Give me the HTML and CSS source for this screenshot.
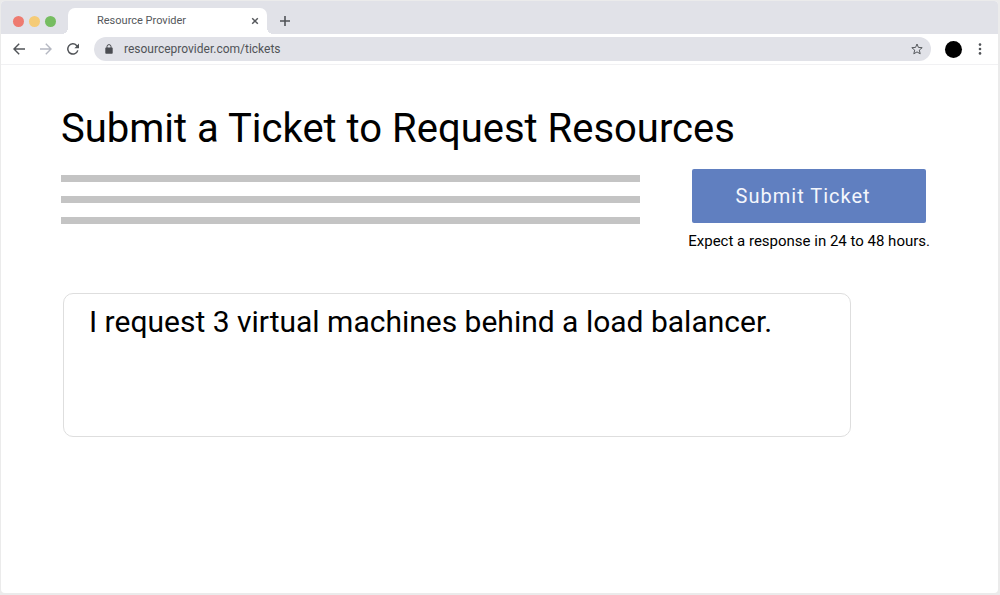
FILE: index.html
```html
<!DOCTYPE html>
<html lang="en">
<head>
  <meta charset="utf-8">
  <meta name="viewport" content="width=device-width, initial-scale=1">
  <title>Resource Provider</title>
  <link rel="stylesheet" href="styles.css">
</head>
<body>
  <div class="window">
    <div class="tab-strip">
      <div class="lights">
        <span class="light light-red"></span>
        <span class="light light-yellow"></span>
        <span class="light light-green"></span>
      </div>
      <div class="tab">
        <span class="tab-title">Resource Provider</span>
        <button class="icon-button" type="button" aria-label="Close tab">
          <svg width="8" height="8" viewBox="0 0 8 8"><path d="M1.2 1.2l5.6 5.6M6.8 1.2L1.2 6.8" stroke="#55585c" stroke-width="1.5"/></svg>
        </button>
      </div>
      <button class="icon-button new-tab" type="button" aria-label="New tab">
        <svg width="12" height="12" viewBox="0 0 12 12"><path d="M6 1v10M1 6h10" stroke="#505357" stroke-width="1.6"/></svg>
      </button>
    </div>
    <div class="toolbar">
      <div class="nav">
        <button class="icon-button" type="button" aria-label="Back">
          <svg width="12" height="12" viewBox="0 0 12 12" fill="none" stroke="#505357" stroke-width="1.4"><path d="M12 6H1.2M6.2 .8L1 6l5.2 5.2"/></svg>
        </button>
        <button class="icon-button" type="button" aria-label="Forward">
          <svg width="12" height="12" viewBox="0 0 12 12" fill="none" stroke="#b5b8c2" stroke-width="1.4"><path d="M0 6h10.8M5.8 .8L11 6l-5.2 5.2"/></svg>
        </button>
        <button class="icon-button" type="button" aria-label="Reload">
          <svg width="12" height="12" viewBox="0 0 12 12"><path d="M10.8 7.4A5.1 5.1 0 1 1 9.6 2.4L10.6 3.5" fill="none" stroke="#505357" stroke-width="1.5"/><path d="M12 .6v4.6H7.4z" fill="#505357"/></svg>
        </button>
      </div>
      <div class="address">
        <svg width="8" height="10" viewBox="0 0 8 10"><rect x=".3" y="3.6" width="7.4" height="6.2" rx=".8" fill="#4b4d52"/><path d="M2 4V2.6a2 2 0 0 1 4 0V4" fill="none" stroke="#4b4d52" stroke-width="1"/></svg>
        <input class="address-input" type="text" aria-label="Address" value="resourceprovider.com/tickets">
        <button class="icon-button" type="button" aria-label="Bookmark">
          <svg width="12" height="12" viewBox="0 0 12 12"><path d="M6 1l1.4 3.4 3.8.3-2.9 2.4.9 3.7L6 8.9l-3.2 1.9.9-3.7L.8 4.7l3.8-.3z" fill="none" stroke="#55585c" stroke-width="1"/></svg>
        </button>
      </div>
      <button class="icon-button avatar" type="button" aria-label="Profile"></button>
      <button class="icon-button" type="button" aria-label="Menu">
        <svg width="4" height="12" viewBox="0 0 4 12" fill="#505357"><circle cx="2" cy="1.6" r="1.3"/><circle cx="2" cy="6" r="1.3"/><circle cx="2" cy="10.4" r="1.3"/></svg>
      </button>
    </div>
    <main class="page">
      <h1 class="title">Submit a Ticket to Request Resources</h1>
      <div class="intro">
        <div class="lines">
          <span class="line"></span>
          <span class="line"></span>
          <span class="line"></span>
        </div>
        <div class="action">
          <button class="submit" type="submit" form="ticket">Submit Ticket</button>
          <p class="note">Expect a response in 24 to 48 hours.</p>
        </div>
      </div>
      <form class="ticket" id="ticket">
        <textarea class="request" aria-label="Request">I request 3 virtual machines behind a load balancer.</textarea>
      </form>
    </main>
  </div>
</body>
</html>
```
FILE: styles.css
```css
* {
  box-sizing: border-box;
}

body {
  margin: 0;
  padding: 1px 2px 2px 1px;
  background: #ebebeb;
  color: #000;
  font-family: Roboto, "Liberation Sans", sans-serif;
}

.window {
  min-height: calc(100vh - 3px);
  border-radius: 4px;
  background: #fff;
  overflow: hidden;
}

.icon-button {
  display: flex;
  flex: none;
  padding: 0;
  border: 0;
  background: none;
}

.tab-strip {
  display: flex;
  align-items: center;
  height: 33px;
  padding-top: 7px;
  background: #e1e2e8;
}

.lights {
  display: flex;
  gap: 5px;
  width: 67px;
  padding-left: 12px;
}

.light {
  width: 11px;
  height: 11px;
  border-radius: 50%;
}

.light-red {
  background: #ee7b70;
}

.light-yellow {
  background: #f5cb76;
}

.light-green {
  background: #76bd61;
}

.tab {
  position: relative;
  display: flex;
  align-items: center;
  justify-content: space-between;
  width: 199px;
  height: 26px;
  padding: 0 8px 0 29px;
  border-radius: 7px 7px 0 0;
  background: #fff;
}

.tab::before,
.tab::after {
  content: "";
  position: absolute;
  bottom: 0;
  width: 6px;
  height: 6px;
}

.tab::before {
  right: 100%;
  background: radial-gradient(circle at 0 0, transparent 6px, #fff 6px);
}

.tab::after {
  left: 100%;
  background: radial-gradient(circle at 100% 0, transparent 6px, #fff 6px);
}

.tab-title {
  color: #55585c;
  font-size: 11px;
  line-height: 14px;
}

.new-tab {
  margin-left: 12px;
}

.toolbar {
  display: flex;
  align-items: center;
  height: 31px;
  padding: 0 16px 0 12px;
  border-bottom: 1px solid #f1f1f3;
}

.nav {
  display: flex;
  gap: 15px;
  margin-right: 15px;
}

.address {
  display: flex;
  flex: 1;
  align-items: center;
  height: 24px;
  padding: 0 8px 0 11px;
  border-radius: 12px;
  background: #e1e2e8;
}

.address-input {
  flex: 1;
  min-width: 0;
  margin-left: 11px;
  padding: 0;
  border: 0;
  background: none;
  color: #505357;
  font: 12px/16px Roboto, "Liberation Sans", sans-serif;
}

.avatar {
  width: 17px;
  height: 17px;
  margin: 0 16px 0 14px;
  border-radius: 50%;
  background: #000;
}

.page {
  padding: 40px 68px 40px 60px;
}

.title {
  margin: 0;
  font-size: 40px;
  font-weight: 400;
  line-height: 48px;
}

.intro {
  display: flex;
  gap: 48px;
  margin-top: 16px;
}

.lines {
  display: flex;
  flex: 1;
  flex-direction: column;
  gap: 14px;
  padding-top: 6px;
}

.line {
  height: 7px;
  background: #c4c4c4;
}

.action {
  flex: none;
}

.submit {
  display: block;
  width: calc(100% - 8px);
  height: 54px;
  margin: 0 4px;
  padding: 0 12px 0 0;
  border: 0;
  border-radius: 2px;
  background: #607fc0;
  color: #f4f6fc;
  font: 20px/24px Roboto, "Liberation Sans", sans-serif;
  letter-spacing: 1px;
}

.note {
  margin: 8px 0 0;
  font-size: 15px;
  line-height: 20px;
}

.ticket {
  margin: 42px 79px 0 2px;
}

.request {
  display: block;
  width: 100%;
  height: 144px;
  padding: 10px 25px;
  border: 1px solid #dedede;
  border-radius: 10px;
  background: #fff;
  color: #000;
  font: 30px/36px Roboto, "Liberation Sans", sans-serif;
  resize: none;
}
```
